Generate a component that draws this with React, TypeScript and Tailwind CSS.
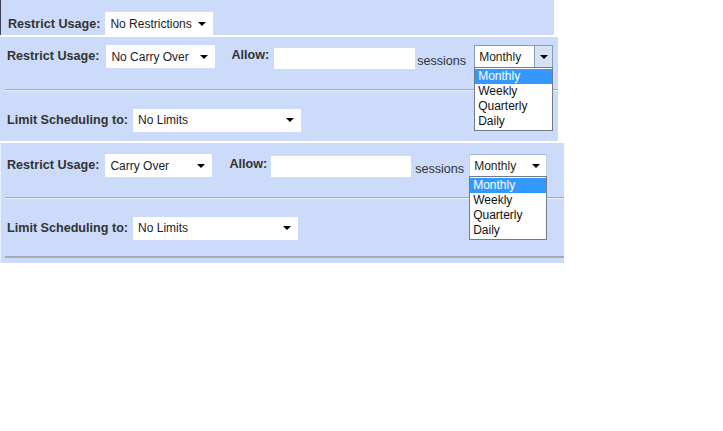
import React from "react";

const font = { fontFamily: '"Liberation Sans", Arial, sans-serif' };

function Arrow() {
  return (
    <span className="inline-block h-0 w-0 border-x-[4px] border-t-[4px] border-x-transparent border-t-black" />
  );
}

function Select({ value, width }: { value: string; width: string }) {
  return (
    <div className={`flex h-[23px] items-center justify-between bg-white pl-[5px] pr-[7px] text-[12px] text-[#222] ${width}`}>
      <span>{value}</span>
      <Arrow />
    </div>
  );
}

function Options({ className }: { className: string }) {
  const items = ["Monthly", "Weekly", "Quarterly", "Daily"];
  return (
    <div className={`absolute z-10 flex flex-col border border-[#6f7a8a] bg-white py-px text-[12px] leading-[15px] text-[#111] ${className}`}>
      {items.map((it, i) => (
        <div key={it} className={`pl-[3px] ${i === 0 ? "bg-[#3399ff] text-white" : ""}`}>
          {it}
        </div>
      ))}
    </div>
  );
}

function Label({ children }: { children: React.ReactNode }) {
  return <span className="text-[12.6px] font-bold text-[#333]">{children}</span>;
}

function Rule() {
  return <div className="h-[2px] border-t border-[#a5aab5] bg-white/60" />;
}

export default function App() {
  return (
    <div className="flex min-h-[431px] w-[723px] flex-col items-start bg-white" style={font}>
      {/* first capture */}
      <div className="flex h-[35px] w-[554px] items-end gap-[5px] border-l border-[#3a3f55] bg-[#cbdbf9] pl-[7px]">
        <div className="flex h-[22px] items-center pt-px">
          <Label>Restrict Usage:</Label>
        </div>
        <Select value="No Restrictions" width="w-[108px] h-[22px]" />
      </div>

      {/* second capture */}
      <div className="mt-[2px] flex h-[104px] w-[558px] flex-col bg-[#cbdbf9] pl-[7px] pt-[8px]">
        <div className="flex h-[23px] items-center">
          <Label>Restrict Usage:</Label>
          <div className="ml-[7px]">
            <Select value="No Carry Over" width="w-[109px]" />
          </div>
          <span className="ml-[16px] -mt-[6px]"><Label>Allow:</Label></span>
          <div className="ml-[5px] mt-[3px] h-[21px] w-[141px] bg-white" />
          <span className="ml-[2px] mt-[9px] text-[12.6px] text-[#333]">sessions</span>
          <div className="relative ml-[8px]">
            <div className="flex h-[23px] w-[79px] items-center border border-[#7f9db9] bg-white text-[12px] text-[#222]">
              <span className="flex-1 pl-[4px]">Monthly</span>
              <div className="flex h-full w-[18px] items-center justify-center border-l border-[#7f9db9] bg-[#d7e3f5]">
                <Arrow />
              </div>
            </div>
            <Options className="left-0 top-[22px] w-[79px]" />
          </div>
        </div>
        <div className="mt-[21px] -ml-[2px]">
          <Rule />
        </div>
        <div className="mt-[18px] flex h-[22px] items-center">
          <Label>Limit Scheduling to:</Label>
          <div className="ml-[5px]">
            <Select value="No Limits" width="w-[168px] h-[22px]" />
          </div>
        </div>
      </div>

      {/* third capture */}
      <div className="mt-[2px] flex h-[120px] w-[564px] flex-col border-l border-[#e6edfb] bg-[#cbdbf9] pl-[6px] pt-[11px]">
        <div className="flex h-[23px] items-center">
          <Label>Restrict Usage:</Label>
          <div className="ml-[6px]">
            <Select value="Carry Over" width="w-[107px]" />
          </div>
          <span className="ml-[17px] -mt-[6px]"><Label>Allow:</Label></span>
          <div className="ml-[4px] mt-[2px] h-[21px] w-[140px] bg-white" />
          <span className="ml-[4px] mt-[8px] text-[12.6px] text-[#333]">sessions</span>
          <div className="relative ml-[5px]">
            <div className="flex h-[23px] w-[78px] items-center justify-between border border-[#c5d3ea] border-t-[#9fb3d8] bg-white pl-[4px] pr-[6px] text-[12px] text-[#222]">
              <span>Monthly</span>
              <Arrow />
            </div>
            <Options className="left-0 top-[22px] w-[78px]" />
          </div>
        </div>
        <div className="mt-[20px] -ml-[2px]">
          <Rule />
        </div>
        <div className="mt-[18px] flex h-[22px] items-center">
          <Label>Limit Scheduling to:</Label>
          <div className="ml-[5px]">
            <Select value="No Limits" width="w-[165px] h-[22px]" />
          </div>
        </div>
        <div className="mt-[17px] -ml-[2px] h-[2px] bg-[#a5aab5]" />
      </div>
    </div>
  );
}
